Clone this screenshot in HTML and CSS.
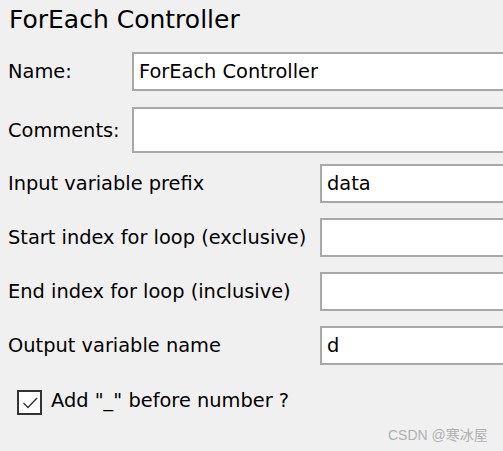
FILE: index.html
```html
<!DOCTYPE html>
<html>
<head>
<meta charset="utf-8">
<link rel="stylesheet" href="styles.css">
</head>
<body>
<div class="panel">
  <h1 class="title">ForEach Controller</h1>
  <div class="top">
    <label class="lbl">Name:</label>
    <div class="field name">ForEach Controller</div>
    <label class="lbl">Comments:</label>
    <div class="field comments"></div>
  </div>
  <div class="params">
    <label class="lbl">Input variable prefix</label>
    <div class="field">data</div>
    <label class="lbl">Start index for loop (exclusive)</label>
    <div class="field"></div>
    <label class="lbl">End index for loop (inclusive)</label>
    <div class="field"></div>
    <label class="lbl">Output variable name</label>
    <div class="field">d</div>
  </div>
  <div class="check-row">
    <span class="box">
      <svg width="20" height="20" viewBox="0 0 20 20"><path d="M3.5 10 L8 14.5 L17 5" fill="none" stroke="#333" stroke-width="1.4"/></svg>
    </span>
    <span class="lbl">Add "_" before number ?</span>
  </div>
  <div class="watermark">CSDN @寒冰屋</div>
</div>
</body>
</html>
```
FILE: styles.css
```css
html, body {
  margin: 0;
  padding: 0;
  background: #f0f0f0;
  overflow: hidden;
}
.panel {
  width: 503px;
  height: 451px;
  overflow: hidden;
  font-family: "DejaVu Sans", sans-serif;
  color: #000;
  position: relative;
}
.title {
  margin: 0;
  padding: 5px 0 0 9px;
  height: 47px;
  box-sizing: border-box;
  font-size: 25px;
  font-weight: normal;
  line-height: 30px;
}
.top {
  display: grid;
  grid-template-columns: 132px 380px;
  row-gap: 16px;
  align-items: center;
  margin-top: 5px;
}
.lbl {
  font-size: 19.4px;
  padding-left: 8px;
  white-space: nowrap;
}
.field {
  box-sizing: border-box;
  height: 39px;
  background: #fff;
  border: 2px solid #a8a8a8;
  font-size: 19.4px;
  line-height: 35px;
  padding-left: 5px;
}
.top .comments {
  height: 46px;
}
.params {
  display: grid;
  grid-template-columns: 320px 200px;
  row-gap: 15px;
  align-items: center;
  margin-top: 11px;
}
.check-row {
  display: flex;
  align-items: center;
  margin-top: 25px;
  padding-left: 17px;
  gap: 9px;
}
.check-row .lbl {
  padding-left: 0;
  position: relative;
  top: -2px;
}
.box {
  width: 25px;
  height: 25px;
  box-sizing: border-box;
  border: 2.5px solid #333;
  background: #fff;
  display: flex;
  align-items: center;
  justify-content: center;
}
.watermark {
  position: absolute;
  left: 388px;
  top: 424px;
  font-family: "Liberation Sans", "Noto Sans CJK SC", sans-serif;
  font-size: 14px;
  color: #b0b0b0;
}
```
